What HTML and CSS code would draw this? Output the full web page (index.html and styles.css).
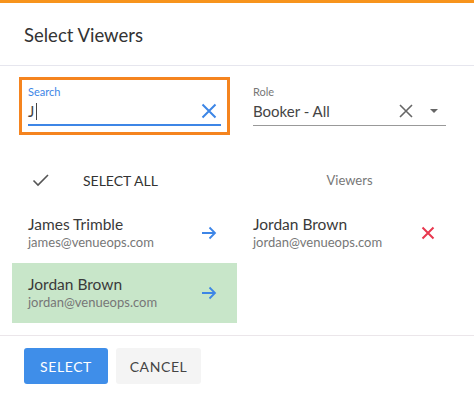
FILE: index.html
```html
<!DOCTYPE html>
<html>
<head>
<meta charset="utf-8">
<link rel="stylesheet" href="styles.css">
</head>
<body>
<div class="dialog">
  <header class="title-bar"><h1 class="title">Select Viewers</h1></header>
  <main class="content">
    <div class="columns">
      <div class="col">
        <div class="focus-ring">
          <div class="field field-active">
            <span class="field-label">Search</span>
            <div class="field-row">
              <span class="field-value">J<span class="caret"></span></span>
              <svg class="icon" viewBox="0 0 24 24"><path d="M5.5 5.5l13 13M18.5 5.5l-13 13" stroke="#3d86e6" stroke-width="2" fill="none"/></svg>
            </div>
          </div>
        </div>
      </div>
      <div class="col">
        <div class="field-plain">
          <div class="field">
            <span class="field-label muted">Role</span>
            <div class="field-row">
              <span class="field-value">Booker - All</span>
              <svg class="icon" viewBox="0 0 24 24"><path d="M6 6l12 12M18 6L6 18" stroke="#666" stroke-width="1.6" fill="none"/></svg>
              <svg class="icon" viewBox="0 0 24 24"><path d="M8 10h8l-4 4z" fill="#666"/></svg>
            </div>
          </div>
        </div>
      </div>
    </div>
    <div class="columns lists">
      <div class="col">
        <div class="list-head">
          <svg class="check" viewBox="0 0 24 24"><path d="M4.5 12.5l4.5 4.5 10-10" stroke="#555" stroke-width="1.6" fill="none"/></svg>
          <span class="select-all">SELECT ALL</span>
        </div>
        <div class="item">
          <div class="item-text"><div class="name">James Trimble</div><div class="email">james@venueops.com</div></div>
          <svg class="icon" viewBox="0 0 24 24"><path d="M5 12h13M12.5 6.5L18 12l-5.5 5.5" stroke="#3d86e6" stroke-width="1.8" fill="none"/></svg>
        </div>
        <div class="item selected">
          <div class="item-text"><div class="name">Jordan Brown</div><div class="email">jordan@venueops.com</div></div>
          <svg class="icon" viewBox="0 0 24 24"><path d="M5 12h13M12.5 6.5L18 12l-5.5 5.5" stroke="#3d86e6" stroke-width="1.8" fill="none"/></svg>
        </div>
      </div>
      <div class="col">
        <div class="list-head center"><span class="viewers">Viewers</span></div>
        <div class="item item-right">
          <div class="item-text"><div class="name">Jordan Brown</div><div class="email">jordan@venueops.com</div></div>
          <svg class="icon" viewBox="0 0 24 24"><path d="M6.5 6.5l11 11M17.5 6.5l-11 11" stroke="#e8384f" stroke-width="2" fill="none"/></svg>
        </div>
      </div>
    </div>
  </main>
  <footer class="actions">
    <button class="btn btn-primary">SELECT</button>
    <button class="btn btn-flat">CANCEL</button>
  </footer>
</div>
</body>
</html>
```
FILE: styles.css
```css
html, body { margin: 0; padding: 0; background: #fff; }
body { font-family: "Lato", "Open Sans", sans-serif; color: #333; width: 474px; height: 412px; overflow: hidden; }
.dialog { border-top: 3px solid #f7941d; display: flex; flex-direction: column; height: 409px; }
.title-bar { height: 62px; border-bottom: 1px solid #e6e6ee; display: flex; align-items: center; padding: 0 24px; flex: none; }
.title { margin: 0; font-size: 18.5px; font-weight: 400; color: #333; padding-top: 2px; }
.content { padding: 11px 12px 0; border-bottom: 1px solid #ebe6ea; height: 270px; box-sizing: border-box; flex: none; }
.columns { display: grid; grid-template-columns: 225px 225px; }
.col { display: flex; flex-direction: column; }
.focus-ring { border: 3px solid #f5841f; padding: 6px; margin: 0 7px; }
.field-plain { padding: 9px 16px; }
.field { height: 40px; border-bottom: 1px solid #999; box-sizing: border-box; display: flex; flex-direction: column; }
.field-active { border-bottom: 2px solid #3d86e6; }
.field-label { font-size: 11px; line-height: 11px; color: #3d86e6; margin-top: 0; }
.field-label.muted { color: #777; }
.field-row { display: flex; align-items: center; height: 26px; gap: 4px; margin-top: 1px; }
.field-value { flex: 1; font-size: 15px; color: #444; display: flex; align-items: center; }
.caret { display: inline-block; width: 1px; height: 17px; background: #444; margin-left: 2px; }
.icon { width: 24px; height: 24px; flex: none; }
.list-head { height: 68px; display: flex; align-items: center; padding: 22px 16px 0 17px; box-sizing: border-box; }
.list-head.center { justify-content: center; padding-left: 0; padding-right: 0; }
.check { width: 24px; height: 24px; flex: none; }
.select-all { margin-left: 30px; font-size: 14px; color: #333; }
.viewers { font-size: 13px; color: #777; }
.item { height: 60px; display: flex; align-items: center; padding: 0 16px; box-sizing: border-box; }
.item.selected { background: #c8e6c9; }
.item-right { padding-right: 22px; }
.item-text { flex: 1; margin-top: -1px; }
.name { font-size: 15.5px; color: #3a3a3a; line-height: 19px; }
.email { font-size: 13px; color: #777; line-height: 17px; }
.actions { display: flex; gap: 8px; padding: 12px 24px; }
.btn { height: 36px; border: none; border-radius: 3px; font-family: inherit; font-size: 14px; letter-spacing: 0.6px; padding: 0; }
.btn-primary { background: #3f8ee9; color: #fff; width: 84px; }
.btn-flat { background: #f4f4f4; color: #444; width: 85px; }
```
